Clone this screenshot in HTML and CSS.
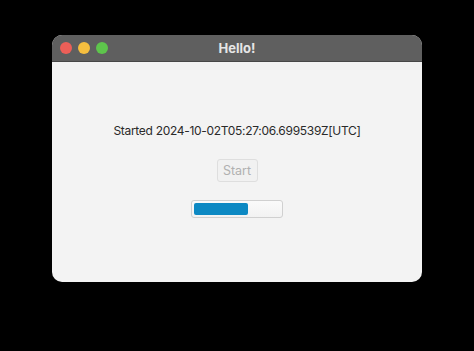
FILE: index.html
```html
<!DOCTYPE html>
<html>
<head>
<meta charset="utf-8">
<link rel="stylesheet" href="styles.css">
</head>
<body>
<div class="window">
  <div class="titlebar">
    <div class="lights">
      <span class="light red"></span>
      <span class="light yellow"></span>
      <span class="light green"></span>
    </div>
    <div class="title">Hello!</div>
  </div>
  <div class="content">
    <div class="label">Started 2024-10-02T05:27:06.699539Z[UTC]</div>
    <button class="btn" disabled>Start</button>
    <div class="progress"><div class="fill" style="width:63%"></div></div>
  </div>
</div>
</body>
</html>
```
FILE: styles.css
```css
html, body {
  margin: 0;
  padding: 0;
  background: #000;
}
body {
  width: 474px;
  height: 351px;
  padding-top: 35px;
  box-sizing: border-box;
  font-family: Inter, "Liberation Sans", sans-serif;
}
.window {
  width: 370px;
  height: 247px;
  margin: 0 auto;
  border-radius: 10px;
  overflow: hidden;
  background: #f3f3f3;
  display: flex;
  flex-direction: column;
}
.titlebar {
  height: 26px;
  background: #5f5f5f;
  border-bottom: 1px solid #474747;
  position: relative;
  display: flex;
  align-items: center;
  justify-content: center;
  flex-shrink: 0;
}
.lights {
  position: absolute;
  left: 8px;
  top: 7px;
  display: flex;
  gap: 6px;
}
.light {
  width: 12px;
  height: 12px;
  border-radius: 50%;
  display: block;
}
.red { background: #ec5f58; }
.yellow { background: #f5be3f; }
.green { background: #5ec54c; }
.title {
  color: #e6e6e6;
  font-weight: 700;
  font-size: 13px;
}
.content {
  flex: 1;
  display: flex;
  flex-direction: column;
  align-items: center;
  padding-top: 61px;
}
.label {
  font-size: 12px;
  color: #2a2a2a;
  line-height: 16px;
  letter-spacing: -0.3px;
}
.btn {
  margin-top: 20px;
  width: 41px;
  height: 23px;
  padding: 0;
  font-family: inherit;
  font-size: 12.5px;
  color: #b0b0b0;
  background: #f1f1f1;
  border: 1px solid #dedede;
  border-radius: 3px;
}
.progress {
  margin-top: 18px;
  width: 92px;
  height: 18px;
  box-sizing: border-box;
  border: 1px solid #d0d0d0;
  border-radius: 3px;
  background: linear-gradient(#fafafa, #f2f2f2);
  padding: 2px;
}
.fill {
  height: 100%;
  background: #0d89c3;
  border-radius: 2px;
}
```
